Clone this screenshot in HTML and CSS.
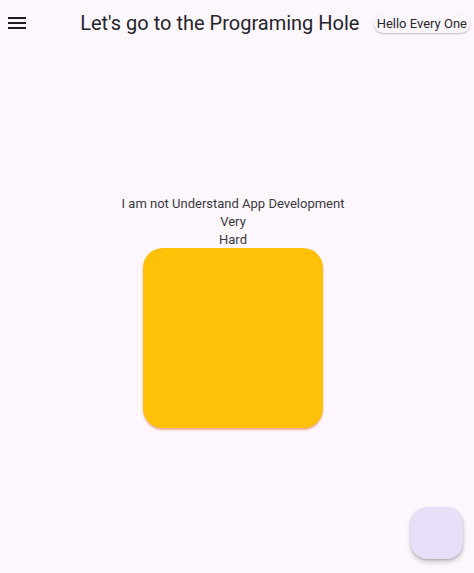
FILE: index.html
```html
<!DOCTYPE html>
<html>
<head>
<meta charset="utf-8">
<link rel="stylesheet" href="styles.css">
</head>
<body>
<div class="app">
  <header class="appbar">
    <button class="menu" aria-label="menu">
      <svg width="18" height="12" viewBox="0 0 18 12"><rect x="0" y="0" width="18" height="2" fill="#1d1b20"/><rect x="0" y="5" width="18" height="2" fill="#1d1b20"/><rect x="0" y="10" width="18" height="2" fill="#1d1b20"/></svg>
    </button>
    <h1 class="title">Let's go to the Programing Hole</h1>
    <span class="chip">Hello Every One</span>
  </header>
  <main class="content">
    <div class="center">
      <p class="text">I am not Understand App Development<br>Very<br>Hard</p>
      <div class="box"></div>
    </div>
  </main>
  <button class="fab" aria-label="action"></button>
</div>
</body>
</html>
```
FILE: styles.css
```css
html, body {
  margin: 0;
  padding: 0;
}
body {
  background: #fdf7fd;
  font-family: Roboto, "Noto Sans", sans-serif;
  color: #1d1b20;
}
.app {
  position: relative;
  width: 474px;
  height: 573px;
  display: flex;
  flex-direction: column;
  overflow: hidden;
}
.appbar {
  height: 46px;
  display: flex;
  align-items: center;
  padding: 0 4px 0 8px;
  box-sizing: border-box;
}
.menu {
  border: 0;
  background: none;
  padding: 0;
  width: 18px;
  height: 12px;
  display: flex;
}
.title {
  flex: 1;
  margin: 0;
  font-weight: 400;
  font-size: 20px;
  text-align: center;
  color: #26242a;
  padding-left: 40px;
}
.chip {
  font-size: 13px;
  padding: 2px 3px;
  border-radius: 10px;
  background: #fbf6fb;
  box-shadow: 0 1px 2px rgba(0,0,0,0.25);
  color: #2a282e;
}
.content {
  flex: 1;
  display: flex;
  align-items: center;
  justify-content: center;
}
.center {
  display: flex;
  flex-direction: column;
  align-items: center;
  margin-top: 2px;
  margin-right: 8px;
}
.text {
  margin: 2px 0 -1px;
  font-size: 13px;
  line-height: 18px;
  text-align: center;
  color: #3a383e;
}
.box {
  width: 180px;
  height: 180px;
  border-radius: 20px;
  background: #ffc107;
  box-shadow: 0 2px 2px rgba(210, 80, 0, 0.45);
}
.fab {
  position: absolute;
  right: 11px;
  bottom: 14px;
  width: 52px;
  height: 52px;
  border: 0;
  border-radius: 16px;
  background: #e8def8;
  box-shadow: 0 3px 5px rgba(0,0,0,0.2), 0 1px 2px rgba(0,0,0,0.15);
}
```
